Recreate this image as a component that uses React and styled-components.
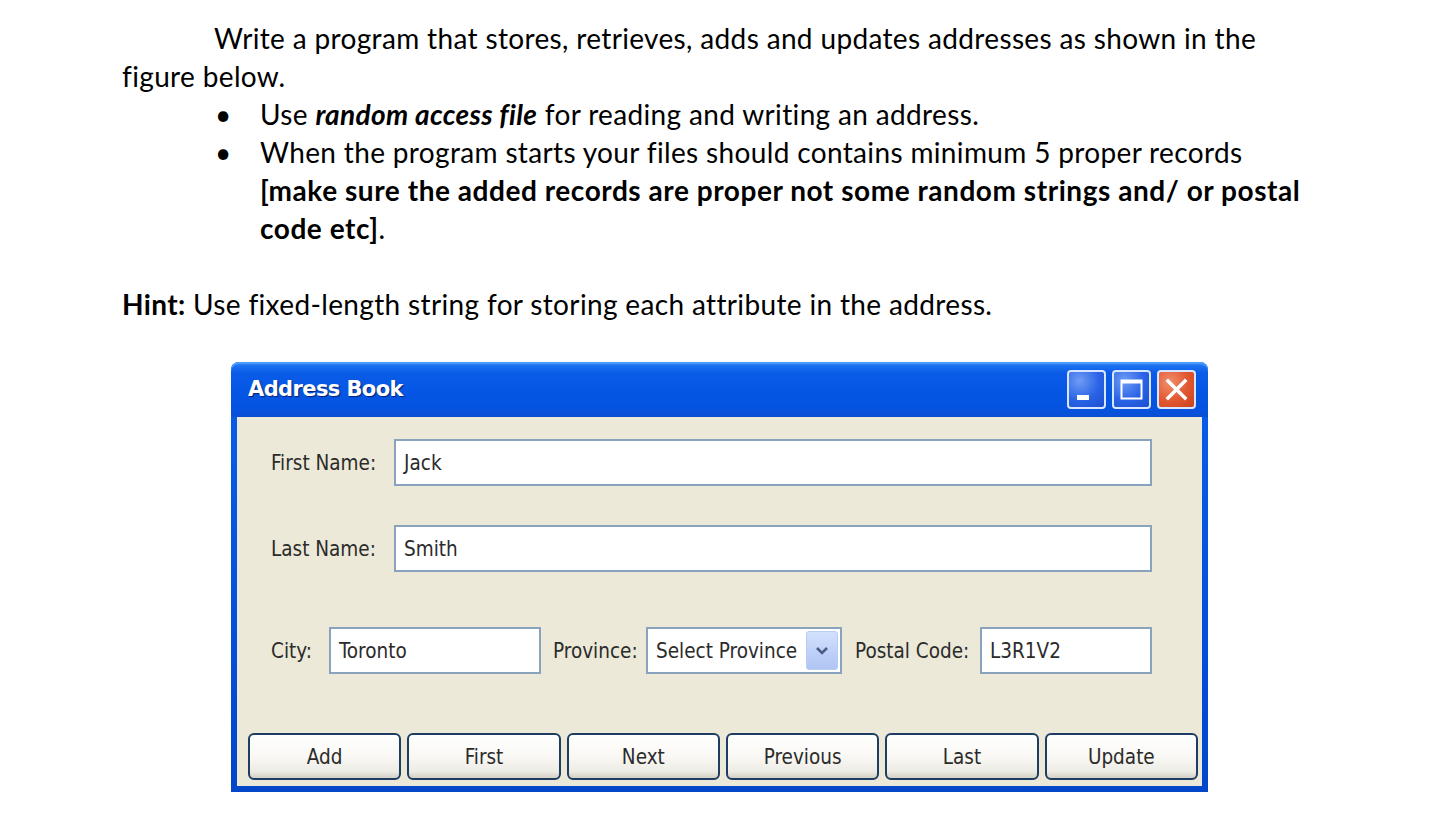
import React from "react";
import styled, { createGlobalStyle } from "styled-components";

const Global = createGlobalStyle`
  html, body { margin: 0; padding: 0; background: #ffffff; }
  body { width: 1452px; height: 832px; overflow: hidden; }
`;

const Page = styled.div`
  padding: 19px 0 0 122px;
  font-family: Lato, "Open Sans", sans-serif;
  font-size: 28px;
  letter-spacing: 0.35px;
  line-height: 38px;
  color: #000;
  font-variant-ligatures: none;
  white-space: nowrap;
`;

const Para = styled.p`
  margin: 0;
  text-indent: ${(p) => p.$indent || 0}px;
`;

const Strong = styled.b`
  letter-spacing: ${(p) => (p.$wide ? "0.55px" : "inherit")};
`;

const Bullets = styled.ul`
  list-style: none;
  margin: 0;
  padding: 0 0 0 138px;
`;

const Bullet = styled.li`
  position: relative;
  &::before {
    content: "•";
    position: absolute;
    left: -45px;
    top: 0;
  }
`;

const Spacer = styled.div`
  height: ${(p) => p.$h}px;
`;

const Window = styled.div`
  margin-left: 109px;
  width: 977px;
  height: 430px;
  box-sizing: border-box;
  display: flex;
  flex-direction: column;
  background: linear-gradient(180deg, #0a5fe8 0%, #0550db 60%, #0346c9 100%);
  border-radius: 8px 8px 0 0;
  padding: 0 6px 6px 6px;
  font-family: "DejaVu Sans Condensed", "DejaVu Sans", sans-serif;
  font-stretch: condensed;
  letter-spacing: 0;
  white-space: normal;
`;

const TitleBar = styled.div`
  height: 55px;
  margin: 0 -6px;
  padding: 0 12px 0 17px;
  border-radius: 8px 8px 0 0;
  display: flex;
  align-items: center;
  background: linear-gradient(
    180deg,
    #3d8cf5 0%,
    #1a6ff0 8%,
    #0a5ce8 20%,
    #0556e4 55%,
    #0553e0 85%,
    #0a4fd4 100%
  );
  box-shadow: inset 0 2px 0 #4b9bff;
`;

const Title = styled.div`
  flex: 1;
  color: #fff;
  font-family: "DejaVu Sans", sans-serif;
  font-stretch: normal;
  font-weight: bold;
  font-size: 21px;
  letter-spacing: -0.6px;
  text-shadow: 1px 1px 1px #0a1f6e;
  padding-bottom: 2px;
`;

const Controls = styled.div`
  display: flex;
  gap: 6px;
`;

const CtlBtn = styled.div`
  width: 39px;
  height: 39px;
  box-sizing: border-box;
  border: 2px solid #d8e6ff;
  border-radius: 4px;
  display: flex;
  align-items: center;
  justify-content: center;
  background: ${(p) =>
    p.$close
      ? "radial-gradient(circle at 30% 30%, #f0906d 0%, #e0562f 55%, #c9421f 100%)"
      : "radial-gradient(circle at 30% 25%, #6f9cf5 0%, #2a63e6 55%, #1a4fcf 100%)"};
`;

const Body = styled.div`
  flex: 1;
  background: #ece9d8;
  display: flex;
  flex-direction: column;
  padding: 22px 4px 0 11px;
`;

const Row = styled.div`
  display: flex;
  align-items: center;
  padding-left: 23px;
  padding-right: 46px;
  margin-bottom: ${(p) => p.$mb || 0}px;
`;

const Label = styled.span`
  width: ${(p) => (p.$w ? `${p.$w}px` : "auto")};
  color: #2b2b2b;
  font-size: 20.5px;
  flex-shrink: 0;
  white-space: nowrap;
`;

const Field = styled.div`
  box-sizing: border-box;
  height: 47px;
  width: ${(p) => (p.$w ? `${p.$w}px` : "auto")};
  flex: ${(p) => (p.$w ? "0 0 auto" : "1")};
  background: #fff;
  border: 2px solid #8aa3bd;
  display: flex;
  align-items: center;
  padding: 0 8px;
  font-size: 20.5px;
  color: #2b2b2b;
  margin-right: ${(p) => p.$mr || 0}px;
  white-space: nowrap;
`;

const Combo = styled(Field)`
  padding: 0 2px 0 8px;
  justify-content: space-between;
`;

const DropBtn = styled.div`
  width: 32px;
  height: 39px;
  box-sizing: border-box;
  border-radius: 3px;
  border: 1px solid #b8cdf5;
  background: linear-gradient(180deg, #d3e1fc 0%, #bccff8 60%, #b0c5f3 100%);
  display: flex;
  align-items: center;
  justify-content: center;
`;

const Buttons = styled.div`
  margin-top: auto;
  display: grid;
  grid-template-columns: repeat(6, 1fr);
  column-gap: 6px;
  margin-bottom: 6px;
`;

const Button = styled.div`
  height: 47px;
  box-sizing: border-box;
  border: 2px solid #1d3d63;
  border-radius: 6px;
  background: linear-gradient(180deg, #ffffff 0%, #f9f8f4 50%, #ecebe4 85%, #d6d0c5 100%);
  display: flex;
  align-items: center;
  justify-content: center;
  font-size: 20.5px;
  color: #2b2b2b;
`;

export default function App() {
  return (
    <>
      <Global />
      <Page>
        <Para $indent={92}>
          Write a program that stores, retrieves, adds and updates addresses as shown in the
          <br />
          figure below.
        </Para>
        <Bullets>
          <Bullet>
            Use <Strong><i>random access file</i></Strong> for reading and writing an address.
          </Bullet>
          <Bullet>
            When the program starts your files should contains minimum 5 proper records
            <br />
            <Strong $wide>[make sure the added records are proper not some random strings and/ or postal</Strong>
            <br />
            <Strong $wide>code etc]</Strong>.
          </Bullet>
        </Bullets>
        <Spacer $h={38} />
        <Para>
          <Strong>Hint:</Strong> Use fixed-length string for storing each attribute in the address.
        </Para>
        <Spacer $h={39} />
        <Window>
          <TitleBar>
            <Title>Address Book</Title>
            <Controls>
              <CtlBtn>
                <svg width="35" height="35" viewBox="0 0 35 35">
                  <rect x="8" y="23" width="12" height="5" fill="#fff" />
                </svg>
              </CtlBtn>
              <CtlBtn>
                <svg width="35" height="35" viewBox="0 0 35 35">
                  <rect x="7.5" y="8.5" width="20" height="18" fill="none" stroke="#fff" strokeWidth="2" />
                  <rect x="7.5" y="8.5" width="20" height="3" fill="#fff" />
                </svg>
              </CtlBtn>
              <CtlBtn $close>
                <svg width="35" height="35" viewBox="0 0 35 35">
                  <path d="M9 9 L26 26 M26 9 L9 26" stroke="#fff" strokeWidth="3.5" strokeLinecap="square" />
                </svg>
              </CtlBtn>
            </Controls>
          </TitleBar>
          <Body>
            <Row $mb={39}>
              <Label $w={123}>First Name:</Label>
              <Field>Jack</Field>
            </Row>
            <Row $mb={55}>
              <Label $w={123}>Last Name:</Label>
              <Field>Smith</Field>
            </Row>
            <Row>
              <Label $w={58}>City:</Label>
              <Field $w={212} $mr={12}>Toronto</Field>
              <Label $w={93}>Province:</Label>
              <Combo $w={196} $mr={13}>
                <span>Select Province</span>
                <DropBtn>
                  <svg width="14" height="10" viewBox="0 0 14 10">
                    <path d="M2 2 L7 7 L12 2" fill="none" stroke="#4a5e86" strokeWidth="2.6" />
                  </svg>
                </DropBtn>
              </Combo>
              <Label $w={125}>Postal Code:</Label>
              <Field>L3R1V2</Field>
            </Row>
            <Buttons>
              <Button>Add</Button>
              <Button>First</Button>
              <Button>Next</Button>
              <Button>Previous</Button>
              <Button>Last</Button>
              <Button>Update</Button>
            </Buttons>
          </Body>
        </Window>
      </Page>
    </>
  );
}
